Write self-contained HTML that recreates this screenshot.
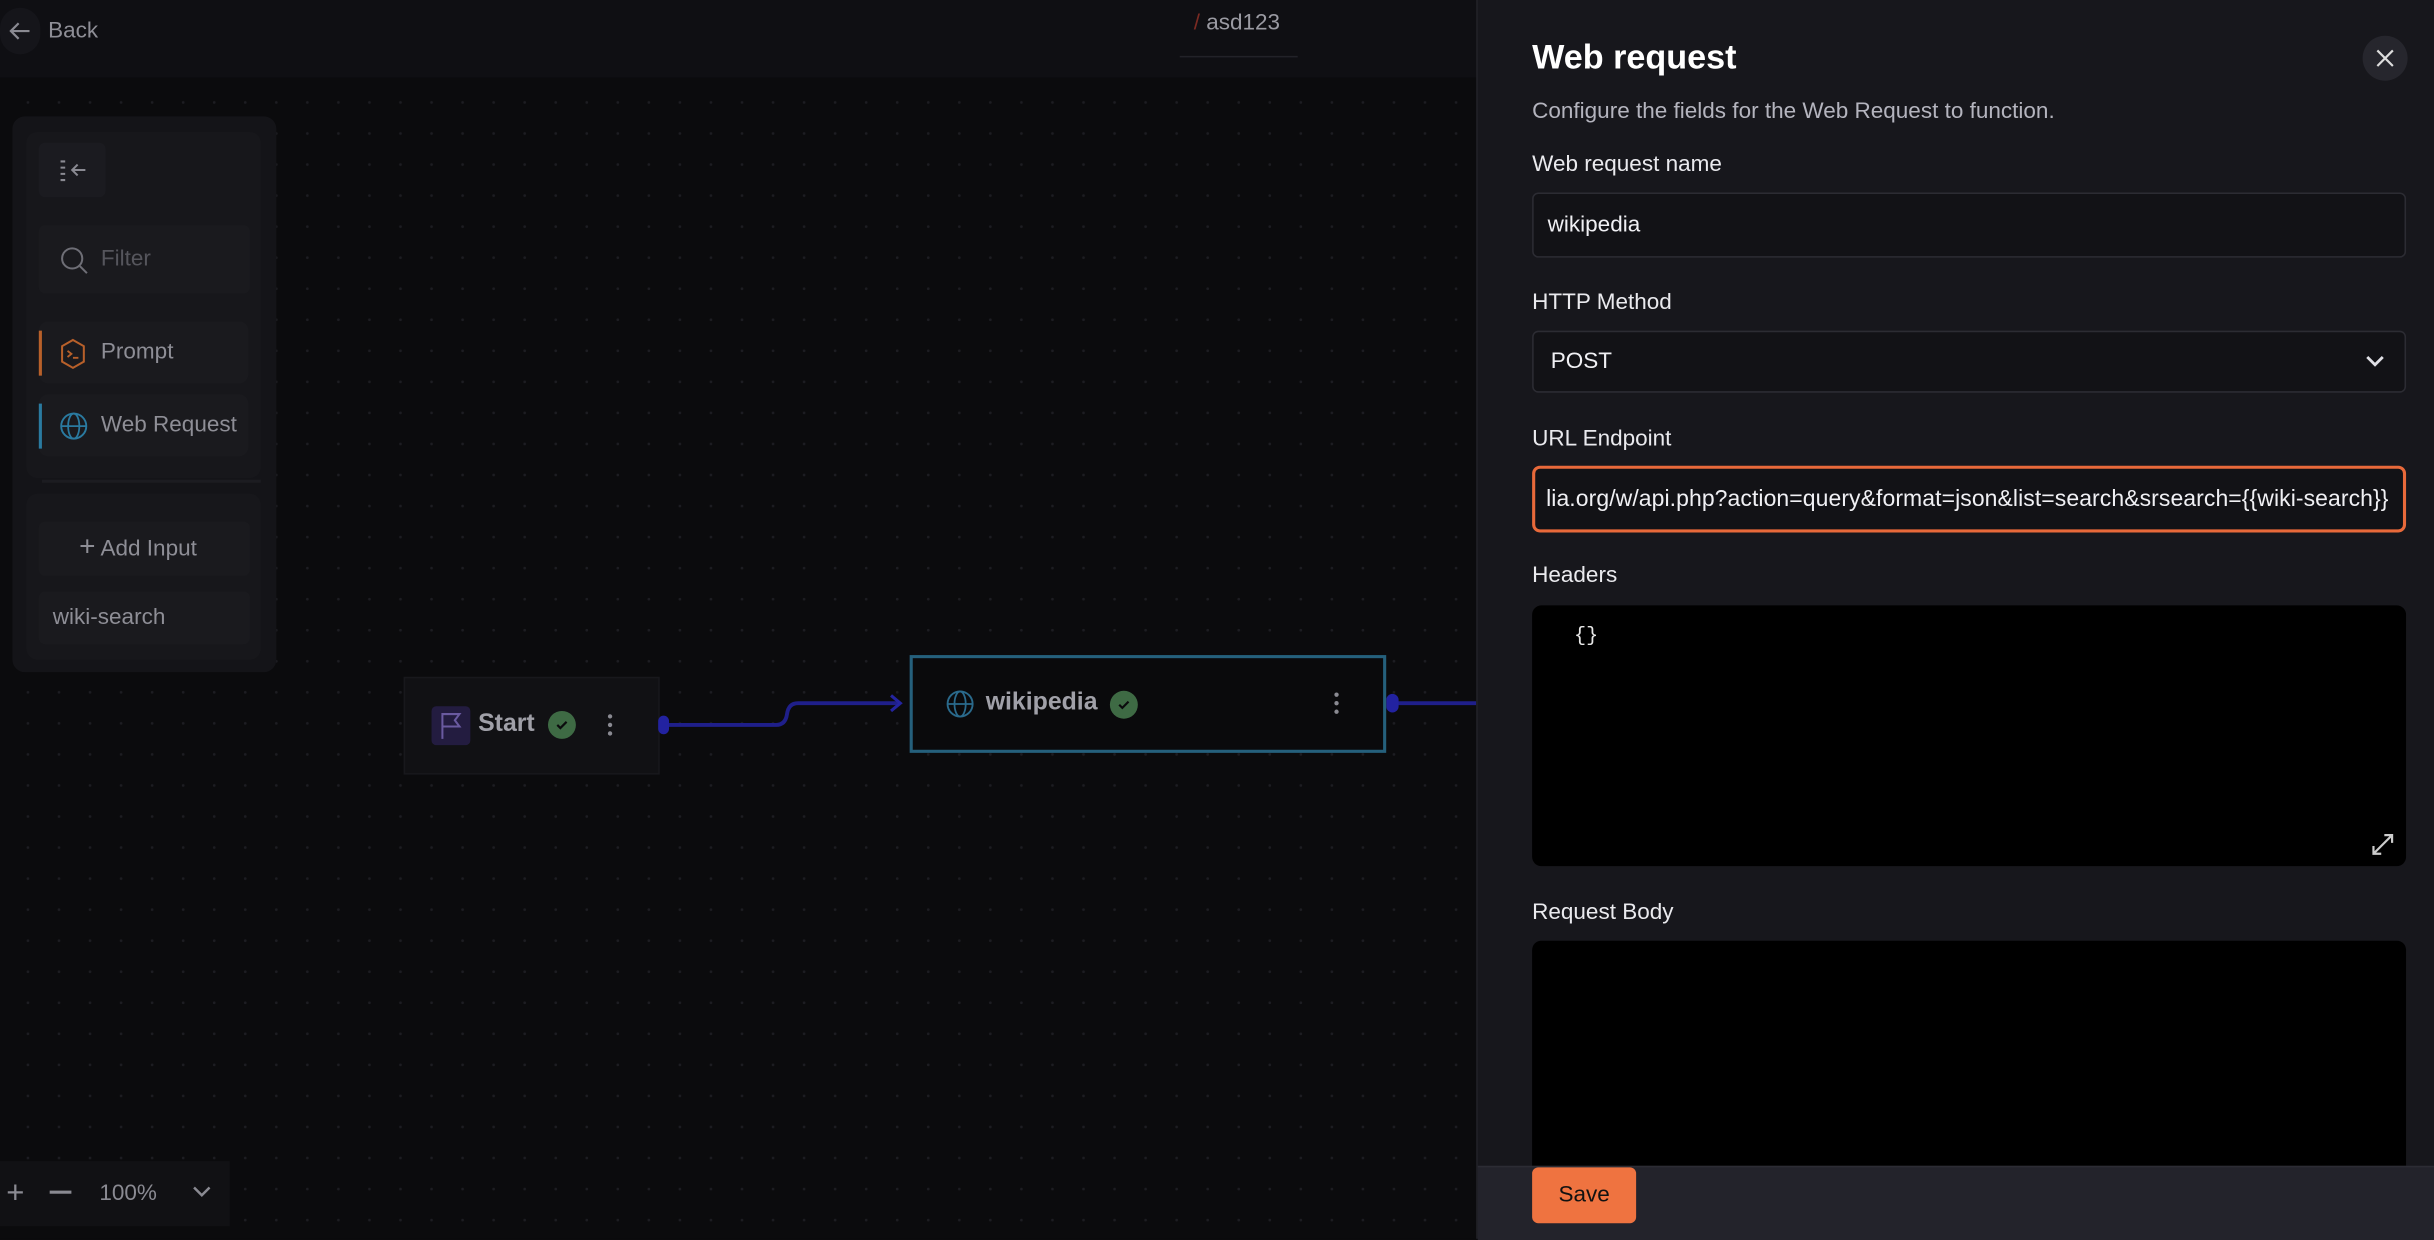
<!DOCTYPE html>
<html><head><meta charset="utf-8"><style>
html,body{margin:0;padding:0;width:2434px;height:1238px;overflow:hidden;background:#0b0b0d;font-family:"Liberation Sans",sans-serif}
#w{position:absolute;left:0;top:0;width:1568px;height:798px;transform:scale(1.55230);transform-origin:0 0;}
.a{position:absolute}
.canvas{left:0;top:50px;width:951px;height:748px;background-color:#0b0b0d;background-image:radial-gradient(#1d1d22 0.8px,transparent 1px);background-size:20px 20px;background-position:8px 6px}
.txt{color:#9a9aa2;font-size:14px}
.item{background:#1a1a1e;border-radius:6px;color:#8e8e96;font-size:14px}
.lbl{color:#eaeaee;font-size:14.5px;left:987px}
.inp{left:987px;width:563px;border:1px solid #2c2c33;background:#121216;border-radius:4px;color:#f0f0f4;font-size:14.5px;box-sizing:border-box}
</style></head><body><div id="w">
<div class="a" style="left:0;top:0;width:951px;height:50px;background:#0f0f13"></div>
<div class="a canvas"></div>
<div class="a" style="left:0;top:5px;width:26px;height:30px;border-radius:15px;background:#15151a"></div>
<svg class="a" style="left:5px;top:13px" width="16" height="14" viewBox="0 0 16 14"><path d="M14 7H2M7 2L2 7l5 5" stroke="#8a8a92" stroke-width="1.4" fill="none"/></svg>
<div class="a txt" style="left:31px;top:12px;font-size:14.5px;color:#8e8e96">Back</div>
<div class="a" style="left:769px;top:7px;font-size:14.5px;color:#9a9aa2"><span style="color:#7a2a22">/</span> asd123</div>
<div class="a" style="left:760px;top:36px;width:76px;height:1px;background:#222228"></div>

<div class="a" style="left:8px;top:75px;width:170px;height:358px;background:#141418;border-radius:8px"></div>
<div class="a" style="left:17px;top:85px;width:151px;height:223px;background:#17171b;border-radius:7px"></div>
<div class="a" style="left:25px;top:92px;width:43px;height:35px;background:#1b1b20;border-radius:4px"></div>
<svg class="a" style="left:38px;top:102px" width="18" height="15" viewBox="0 0 18 15"><path d="M1 2h3M1 6h3M1 10h3M1 14h3M17 7.5H9M12 4l-3.5 3.5L12 11" stroke="#8a8a92" stroke-width="1.3" fill="none"/></svg>
<div class="a item" style="left:25px;top:145px;width:136px;height:44px;border-radius:4px"></div>
<svg class="a" style="left:38px;top:158px" width="20" height="20" viewBox="0 0 20 20"><circle cx="8.5" cy="8.5" r="6.5" stroke="#6e6e76" stroke-width="1.3" fill="none"/><path d="M13.5 13.5L18 18" stroke="#6e6e76" stroke-width="1.3"/></svg>
<div class="a" style="left:65px;top:159px;color:#55555c;font-size:14.5px">Filter</div>
<div class="a item" style="left:25px;top:207px;width:135px;height:40px"></div>
<div class="a" style="left:25px;top:213px;width:2px;height:29px;background:#b8602a"></div>
<svg class="a" style="left:38px;top:218px" width="18" height="20" viewBox="0 0 18 20"><path d="M9 1l7 4v10l-7 4-7-4V5z" stroke="#b8602a" stroke-width="1.3" fill="none"/><path d="M5.5 8l2.5 2-2.5 2M9 12.5h3.5" stroke="#b8602a" stroke-width="1.2" fill="none"/></svg>
<div class="a" style="left:65px;top:219px;color:#8e8e96;font-size:14.5px">Prompt</div>
<div class="a item" style="left:25px;top:254px;width:135px;height:40px"></div>
<div class="a" style="left:25px;top:260px;width:2px;height:29px;background:#2a7aa0"></div>
<svg class="a" style="left:38px;top:265px" width="19" height="19" viewBox="0 0 20 20"><circle cx="10" cy="10" r="8.5" stroke="#2a7aa0" stroke-width="1.3" fill="none"/><ellipse cx="10" cy="10" rx="3.8" ry="8.5" stroke="#2a7aa0" stroke-width="1.2" fill="none"/><path d="M1.5 10h17" stroke="#2a7aa0" stroke-width="1.2"/></svg>
<div class="a" style="left:65px;top:266px;color:#8e8e96;font-size:14.5px">Web Request</div>
<div class="a" style="left:27px;top:309px;width:141px;height:2px;background:#1c1c21"></div>
<div class="a" style="left:17px;top:318px;width:151px;height:107px;background:#17171b;border-radius:7px"></div>
<div class="a item" style="left:25px;top:336px;width:136px;height:35px;border-radius:4px"></div>
<div class="a" style="left:51px;top:345px;color:#8e8e96;font-size:14.5px"><span style="font-size:18px;line-height:14px">+</span> Add Input</div>
<div class="a item" style="left:25px;top:381px;width:136px;height:34px;border-radius:4px"></div>
<div class="a" style="left:34px;top:390px;color:#8e8e96;font-size:14.5px">wiki-search</div>

<div class="a" style="left:260px;top:436px;width:165px;height:63px;background:#111114;border:1px solid #18181c;box-sizing:border-box"></div>
<div class="a" style="left:278px;top:455px;width:25px;height:25px;background:#231c40;border-radius:3px"></div>
<svg class="a" style="left:283px;top:458px" width="16" height="19" viewBox="0 0 16 19"><path d="M2 18V2h11l-3 4 3 4H2" stroke="#6a5aa0" stroke-width="1.3" fill="none"/></svg>
<div class="a" style="left:308px;top:458px;color:#a0a0a8;font-size:16px;font-weight:bold">Start</div>
<div class="a" style="left:353px;top:458px;width:18px;height:18px;border-radius:50%;background:#3e6a44"></div>
<svg class="a" style="left:356px;top:461px" width="12" height="12" viewBox="0 0 12 12"><path d="M3 6l2 2 4-4" stroke="#0b0b0d" stroke-width="1.4" fill="none"/></svg>
<svg class="a" style="left:390px;top:459px" width="6" height="16"><circle cx="3" cy="2.5" r="1.4" fill="#8a8a92"/><circle cx="3" cy="8" r="1.4" fill="#8a8a92"/><circle cx="3" cy="13.5" r="1.4" fill="#8a8a92"/></svg>
<svg class="a" style="left:420px;top:440px" width="540" height="40" viewBox="0 0 540 40"><path d="M8 27H80Q86 27 87 20Q88 13 94 13H160" stroke="#1f1f8a" stroke-width="2.5" fill="none"/><path d="M154 8l6 5-6 5" stroke="#2424a0" stroke-width="2" fill="none"/><rect x="4" y="21" width="7" height="12" rx="3.5" fill="#2222a0"/><path d="M477 13H531" stroke="#1f1f8a" stroke-width="2.5"/><rect x="473" y="7" width="8" height="12" rx="4" fill="#2222a0"/></svg>
<div class="a" style="left:586px;top:422px;width:307px;height:63px;border:2px solid #25607c;box-sizing:border-box;background:#0a0a0c"></div>
<svg class="a" style="left:609px;top:444px" width="19" height="19" viewBox="0 0 20 20"><circle cx="10" cy="10" r="8.5" stroke="#2a6a8c" stroke-width="1.3" fill="none"/><ellipse cx="10" cy="10" rx="3.8" ry="8.5" stroke="#2a6a8c" stroke-width="1.2" fill="none"/><path d="M1.5 10h17" stroke="#2a6a8c" stroke-width="1.2"/></svg>
<div class="a" style="left:635px;top:444px;color:#a0a0a8;font-size:16px;font-weight:bold">wikipedia</div>
<div class="a" style="left:715px;top:445px;width:18px;height:18px;border-radius:50%;background:#3e6a44"></div>
<svg class="a" style="left:718px;top:448px" width="12" height="12" viewBox="0 0 12 12"><path d="M3 6l2 2 4-4" stroke="#0b0b0d" stroke-width="1.4" fill="none"/></svg>
<svg class="a" style="left:858px;top:445px" width="6" height="16"><circle cx="3" cy="2.5" r="1.4" fill="#8a8a92"/><circle cx="3" cy="8" r="1.4" fill="#8a8a92"/><circle cx="3" cy="13.5" r="1.4" fill="#8a8a92"/></svg>

<div class="a" style="left:0;top:748px;width:148px;height:42px;background:#111114"></div>
<div class="a" style="left:4px;top:758px;color:#8a8a92;font-size:20px">+</div>
<div class="a" style="left:32px;top:767px;width:14px;height:2px;background:#8a8a92"></div>
<div class="a" style="left:64px;top:761px;color:#8a8a92;font-size:14.5px">100%</div>
<svg class="a" style="left:123px;top:763px" width="14" height="10" viewBox="0 0 14 10"><path d="M2 2l5 5 5-5" stroke="#8a8a92" stroke-width="1.6" fill="none"/></svg>

<div class="a" style="left:951px;top:0;width:617px;height:798px;background:#17171c;border-left:1px solid #222228"></div>
<div class="a" style="left:987px;top:24px;color:#fff;font-size:22px;font-weight:bold">Web request</div>
<div class="a" style="left:1522px;top:23px;width:29px;height:29px;border-radius:50%;background:#26262d"></div>
<svg class="a" style="left:1530px;top:31px" width="13" height="13" viewBox="0 0 13 13"><path d="M1.5 1.5l10 10M11.5 1.5l-10 10" stroke="#ddd" stroke-width="1.4"/></svg>
<div class="a" style="left:987px;top:64px;color:#b4b4be;font-size:14.5px">Configure the fields for the Web Request to function.</div>
<div class="a lbl" style="top:98px">Web request name</div>
<div class="a inp" style="top:124px;height:42px;padding:12px 9px">wikipedia</div>
<div class="a lbl" style="top:187px">HTTP Method</div>
<div class="a inp" style="top:213px;height:40px;padding:11px 11px">POST</div>
<svg class="a" style="left:1523px;top:228px" width="14" height="10" viewBox="0 0 14 10"><path d="M2 2l5 5 5-5" stroke="#e0e0e6" stroke-width="1.8" fill="none"/></svg>
<div class="a lbl" style="top:275px">URL Endpoint</div>
<div class="a inp" style="top:300px;height:43px;border:2px solid #e8693a;border-radius:5px;padding:12px 7px;white-space:nowrap;overflow:hidden;font-size:14.8px;letter-spacing:0.05px">lia.org/w/api.php?action=query&amp;format=json&amp;list=search&amp;srsearch={{wiki-search}}</div>
<div class="a lbl" style="top:363px">Headers</div>
<div class="a" style="left:987px;top:390px;width:563px;height:168px;background:#000;border-radius:6px"></div>
<div class="a" style="left:1014px;top:402px;color:#e8e8e8;font-family:'Liberation Mono',monospace;font-size:13px">{}</div>
<svg class="a" style="left:1527px;top:536px" width="16" height="16" viewBox="0 0 16 16"><path d="M2 14L14 2M9 2h5v5M2 9v5h5" stroke="#ccc" stroke-width="1.4" fill="none"/></svg>
<div class="a lbl" style="top:580px">Request Body</div>
<div class="a" style="left:987px;top:606px;width:563px;height:150px;background:#000;border-radius:6px 6px 0 0"></div>
<div class="a" style="left:952px;top:751px;width:616px;height:47px;background:#23232b;border-top:1px solid #2c2c34"></div>
<div class="a" style="left:987px;top:752px;width:67px;height:36px;background:#ef7340;border-radius:4px;color:#111;font-size:14.5px;text-align:center;line-height:36px">Save</div>
</div></body></html>
